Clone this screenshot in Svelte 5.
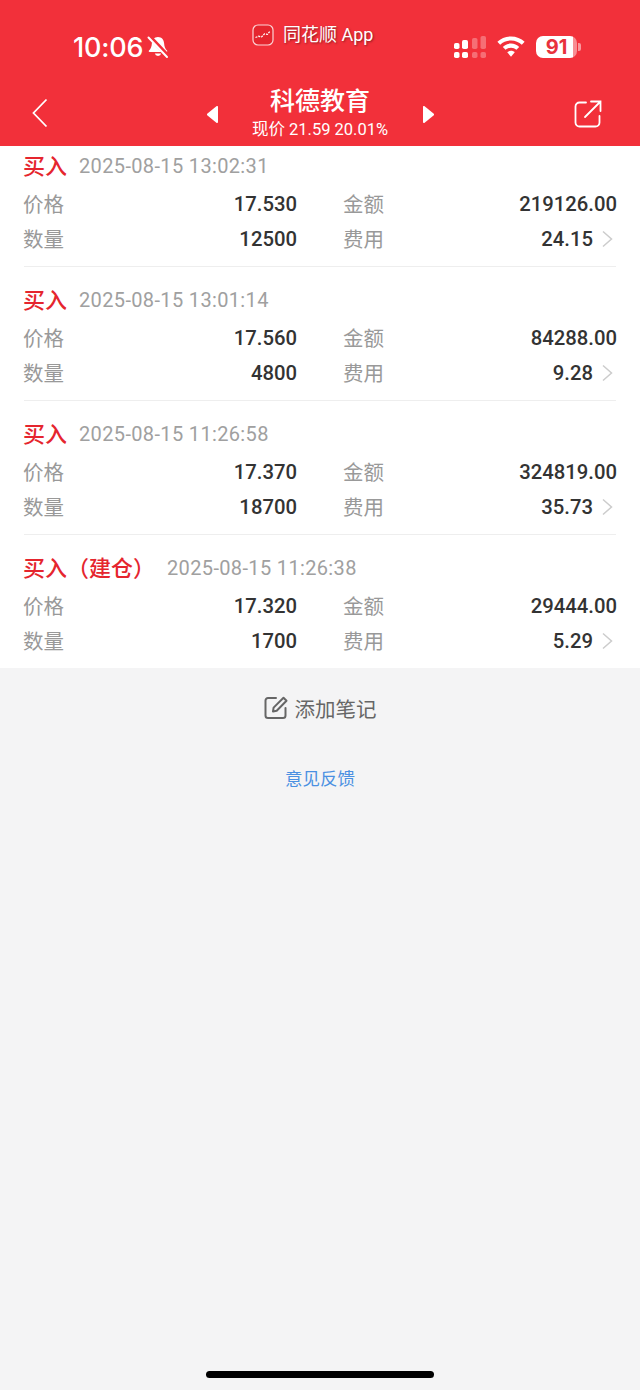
<script>
	const trades = [
		{ side: '买入', time: '2025-08-15 13:02:31', price: '17.530', amount: '219126.00', qty: '12500', fee: '24.15' },
		{ side: '买入', time: '2025-08-15 13:01:14', price: '17.560', amount: '84288.00', qty: '4800', fee: '9.28' },
		{ side: '买入', time: '2025-08-15 11:26:58', price: '17.370', amount: '324819.00', qty: '18700', fee: '35.73' },
		{ side: '买入（建仓）', time: '2025-08-15 11:26:38', price: '17.320', amount: '29444.00', qty: '1700', fee: '5.29' }
	];
</script>

<div class="page">
	<header class="top">
		<div class="status">
			<div class="clock">
				<span>10:06</span>
				<svg width="24" height="24" viewBox="0 0 24 24">
					<path d="M12 2c-3.800 0-5.800 2.800-6.100 6.200-.3 3.600-1.100 5.600-2.900 7.400-.6.600-.2 1.400.6 1.400h16.800c.8 0 1.200-.8.600-1.400-1.800-1.800-2.600-3.800-2.900-7.400C17.800 4.800 15.800 2 12 2z" fill="#fff" />
					<path d="M8.800 18.500a3.300 3.300 0 0 0 6.400 0z" fill="#fff" />
					<path d="M3.500 1.500l18 19" stroke="#f2303a" stroke-width="4" />
					<path d="M2.500 2.500l18.500 19.500" stroke="#fff" stroke-width="2" stroke-linecap="round" />
				</svg>
			</div>
			<div class="app-label">
				<svg width="22" height="22" viewBox="0 0 22 22">
					<rect x="1" y="1" width="20" height="20" rx="5" fill="#e5252e" stroke="#fbd4d6" stroke-width="1.200" />
					<path d="M3.500 13.500l3-1.200 3 .6 3-3 3 .4 2.500-3" fill="none" stroke="#fff" stroke-width="1.300" stroke-dasharray="2 1" />
				</svg>
				<span>同花顺 App</span>
			</div>
			<div class="indicators">
				<svg width="32" height="22" viewBox="0 0 32 22">
					<rect x="0" y="7" width="5.500" height="6" rx="1.800" fill="#fff" />
					<rect x="0" y="16" width="5.500" height="6" rx="1.800" fill="#fff" />
					<rect x="8" y="4" width="6" height="9" rx="1.800" fill="#fff" />
					<rect x="8" y="16" width="6" height="6" rx="1.800" fill="#fff" />
					<rect x="18" y="2" width="5.500" height="11" rx="1.800" fill="#fff" opacity=".3" />
					<rect x="18" y="16" width="5.500" height="6" rx="1.800" fill="#fff" opacity=".3" />
					<rect x="26.500" y="0" width="5.500" height="13" rx="1.800" fill="#fff" opacity=".3" />
					<rect x="26.500" y="16" width="5.500" height="6" rx="1.800" fill="#fff" opacity=".3" />
				</svg>
				<svg class="wifi" width="28" height="22" viewBox="0 0 29 22">
					<path d="M14.500 0C9 0 4 2 .4 5.600l2.900 3.100C6.200 5.900 10.100 4.200 14.500 4.200s8.300 1.700 11.200 4.500l2.900-3.100C25 2 20 0 14.500 0z" fill="#fff" />
					<path d="M14.500 7.500c-3.300 0-6.300 1.300-8.500 3.400l2.900 3c1.500-1.300 3.500-2.200 5.600-2.200s4.100.9 5.600 2.200l2.900-3c-2.200-2.100-5.200-3.400-8.500-3.400z" fill="#fff" />
					<path d="M14.500 15c-1.500 0-2.900.6-3.900 1.500l3.900 4.500 3.900-4.500c-1-.9-2.400-1.500-3.900-1.500z" fill="#fff" />
				</svg>
				<div class="battery">
					<div class="cell">91</div>
					<div class="nub"></div>
				</div>
			</div>
		</div>
		<nav class="nav">
			<svg class="back" width="18" height="30" viewBox="0 0 18 30">
				<path d="M15.500 1.500L2.500 15l13 13.500" fill="none" stroke="#fff" stroke-width="1.800" />
			</svg>
			<div class="title-wrap">
				<svg width="12" height="17" viewBox="0 0 12 17"><path d="M11.500 1v15a1 1 0 0 1-1.600.8L1 9.500a1.300 1.300 0 0 1 0-2L9.900.2A1 1 0 0 1 11.500 1z" fill="#fff" /></svg>
				<div class="title">
					<h1>科德教育</h1>
					<p>现价 21.59 20.01%</p>
				</div>
				<svg width="12" height="17" viewBox="0 0 12 17"><path d="M.5 1v15a1 1 0 0 0 1.600.8l8.900-7.300a1.300 1.300 0 0 0 0-2L2.100.2A1 1 0 0 0 .5 1z" fill="#fff" /></svg>
			</div>
			<svg class="share" width="28" height="28" viewBox="0 0 28 28">
				<path d="M12 2.500H5.500a4 4 0 0 0-4 4v16a4 4 0 0 0 4 4h16a4 4 0 0 0 4-4V16" fill="none" stroke="#fff" stroke-width="1.800" stroke-linecap="round" />
				<path d="M11 17L26 2M17 1.500h9.500V11" fill="none" stroke="#fff" stroke-width="1.800" stroke-linecap="round" />
			</svg>
		</nav>
	</header>

	<section class="list">
		{#each trades as t}
			<article class="trade">
				<div class="head">
					<span class="side">{t.side}</span>
					<span class="time">{t.time}</span>
				</div>
				<div class="grid">
					<div class="cell-row"><span class="label">价格</span><span class="value">{t.price}</span></div>
					<div class="cell-row"><span class="label">金额</span><span class="value">{t.amount}</span></div>
					<div class="cell-row"><span class="label">数量</span><span class="value">{t.qty}</span></div>
					<div class="cell-row">
						<span class="label">费用</span>
						<span class="value fee">
							{t.fee}
							<svg width="12" height="18" viewBox="0 0 12 18"><path d="M2 1.500l8.500 7.500-8.500 7.500" fill="none" stroke="#cccccc" stroke-width="1.500" /></svg>
						</span>
					</div>
				</div>
			</article>
		{/each}
	</section>

	<button class="note">
		<svg width="24" height="24" viewBox="0 0 24 24">
			<path d="M12 2H4a2.500 2.500 0 0 0-2.500 2.500v15A2.500 2.500 0 0 0 4 22h15a2.500 2.500 0 0 0 2.500-2.500V12" fill="none" stroke="#666" stroke-width="2" stroke-linecap="round" />
			<path d="M9 15.500l.6-3.900L19.500 1.800l3 3-9.800 10z" fill="none" stroke="#666" stroke-width="2" stroke-linejoin="round" />
		</svg>
		<span>添加笔记</span>
	</button>
	<a class="feedback" href="#feedback">意见反馈</a>

	<div class="home"></div>
</div>

<style>
	:global(body) {
		margin: 0;
		background: #f4f4f5;
	}

	.page {
		display: flex;
		flex-direction: column;
		height: 1390px;
		font-family: Roboto, "Noto Sans CJK SC", sans-serif;
	}

	.top {
		height: 146px;
		background: #f2303a;
		color: #fff;
	}

	.status {
		position: relative;
		display: flex;
		align-items: center;
		justify-content: space-between;
		height: 78px;
		padding: 16px 59px 0 73px;
		box-sizing: border-box;
	}

	.clock {
		display: flex;
		align-items: center;
		gap: 3px;
		font-family: Inter, sans-serif;
		font-size: 27px;
		font-weight: 500;
		letter-spacing: -0.2px;
	}

	.app-label {
		position: absolute;
		top: 20px;
		left: 252px;
		display: flex;
		align-items: center;
		gap: 9px;
		font-size: 18px;
		text-shadow: 1px 1px 2px rgba(110, 20, 25, 0.7);
	}

	.app-label span {
		margin-bottom: 4px;
	}

	.indicators {
		display: flex;
		align-items: center;
		gap: 11px;
	}

	.battery {
		display: flex;
		align-items: center;
		gap: 1px;
	}

	.battery .cell {
		width: 41px;
		height: 22px;
		border-radius: 7px;
		background: linear-gradient(90deg, #fff 90%, rgba(255, 255, 255, 0.45) 90%);
		color: #e8323c;
		font-family: Inter, sans-serif;
		font-size: 20px;
		font-weight: 700;
		line-height: 22px;
		text-align: center;
	}

	.battery .nub {
		width: 3px;
		height: 8px;
		border-radius: 0 2px 2px 0;
		background: rgba(255, 255, 255, 0.5);
	}

	.nav {
		display: grid;
		grid-template-columns: 1fr auto 1fr;
		align-items: start;
		padding: 0 38px 0 31px;
	}

	.back {
		margin-top: 20px;
	}

	.share {
		justify-self: end;
		margin-top: 22px;
	}

	.title-wrap {
		display: flex;
		align-items: center;
		gap: 32px;
		transform: translateX(3.500px);
	}

	.title-wrap svg {
		margin-top: 12px;
	}

	.title {
		width: 140px;
		text-align: center;
	}

	h1 {
		margin: 4px 0 0;
		font-size: 25px;
		font-weight: 500;
		line-height: 40px;
	}

	.title p {
		margin: 0;
		font-size: 16.500px;
		line-height: 16px;
		white-space: nowrap;
	}

	.list {
		padding-top: 3px;
		background: #fff;
	}

	.trade {
		margin: 0 24px;
		padding: 16px 0 10px;
		border-bottom: 1px solid #eeeeee;
	}

	.trade:first-child {
		padding-top: 0;
	}

	.trade:last-child {
		border-bottom: 0;
	}

	.head {
		display: flex;
		align-items: center;
		gap: 12px;
		height: 34px;
		margin-bottom: 3px;
	}

	.side {
		margin: -4px 0 0 -1px;
		color: #e5252e;
		font-size: 22px;
		font-weight: 500;
	}

	.time {
		color: #a0a0a0;
		font-size: 20px;
		letter-spacing: 0.350px;
	}

	.grid {
		display: grid;
		grid-template-columns: 273px 273px;
		gap: 0 47px;
	}

	.cell-row {
		display: flex;
		align-items: center;
		justify-content: space-between;
		height: 35px;
	}

	.label {
		margin: -2px 0 0 -1px;
		color: #999;
		font-size: 20.500px;
	}

	.value {
		color: #333;
		font-size: 20.300px;
		font-weight: 500;
	}

	.fee {
		display: flex;
		align-items: center;
		gap: 8px;
		margin-right: 4px;
	}

	.note {
		display: flex;
		align-items: center;
		justify-content: center;
		gap: 7px;
		height: 40px;
		margin-top: 20px;
		padding: 0;
		border: 0;
		background: none;
		color: #666;
		font: inherit;
		font-size: 20.500px;
	}

	.feedback {
		margin-top: 40px;
		color: #4a90e2;
		font-size: 17.500px;
		line-height: 22px;
		text-align: center;
		text-decoration: none;
	}

	.home {
		width: 228px;
		height: 7px;
		margin: auto auto 12px;
		border-radius: 4px;
		background: #000;
	}
</style>
